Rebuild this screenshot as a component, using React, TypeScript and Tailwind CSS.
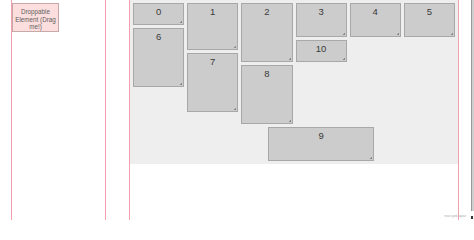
const tiles = [
  { id: 0, cls: "col-start-1 col-span-2 row-start-1 row-span-2" },
  { id: 1, cls: "col-start-3 col-span-2 row-start-1 row-span-4" },
  { id: 2, cls: "col-start-5 col-span-2 row-start-1 row-span-5" },
  { id: 3, cls: "col-start-7 col-span-2 row-start-1 row-span-3" },
  { id: 4, cls: "col-start-9 col-span-2 row-start-1 row-span-3" },
  { id: 5, cls: "col-start-11 col-span-2 row-start-1 row-span-3" },
  { id: 6, cls: "col-start-1 col-span-2 row-start-3 row-span-5" },
  { id: 7, cls: "col-start-3 col-span-2 row-start-5 row-span-5" },
  { id: 8, cls: "col-start-5 col-span-2 row-start-6 row-span-5" },
  { id: 9, cls: "col-start-6 col-span-4 row-start-11 row-span-3" },
  { id: 10, cls: "col-start-7 col-span-2 row-start-4 row-span-2" },
];

const Tile = ({ id, cls }: { id: number; cls: string }) => (
  <div
    className={`relative border border-[#a8a8a8] bg-[#cccccc] text-center ${cls}`}
  >
    <span className="block pt-[2px] text-[9.5px] leading-[11px] text-[#3a3a3a]">
      {id}
    </span>
    {/* resize handle */}
    <span className="absolute bottom-[1px] right-[1px] h-[2px] w-[2px] border-b border-r border-[#888]" />
  </div>
);

export default function App() {
  return (
    <div className="relative flex h-[220px] w-[474px] overflow-hidden bg-white font-['Liberation_Sans',Arial,sans-serif]">
      <div className="w-[11px] shrink-0" />

      {/* Sidebar */}
      <div className="h-full w-[95px] shrink-0 border-x border-[#f2a0ae]">
        <div
          draggable
          className="mt-[3px] h-[29px] w-[47px] border border-[#c9a8a8] bg-[#fddede] pt-[4px] text-center text-[6.3px] leading-[7.5px] text-[#5e5e5e]"
        >
          Droppable
          <br />
          Element (Drag
          <br />
          me!)
        </div>
      </div>

      <div className="w-[23px] shrink-0" />

      {/* Main grid */}
      <div className="h-full w-[330px] shrink-0 border-x border-[#f2a0ae]">
        <div className="grid grid-cols-12 grid-rows-[repeat(13,9.4px)] gap-[3px] bg-[#eeeeee] p-[3px]">
          {tiles.map((t) => (
            <Tile key={t.id} id={t.id} cls={t.cls} />
          ))}
        </div>
      </div>

      <div className="flex-1" />

      {/* Scrollbar */}
      <div className="h-[211px] w-[3px] shrink-0 border-l border-[#999] bg-[#cfcfcf]" />

      <span className="absolute bottom-[2px] right-[8px] text-[3px] leading-[3px] text-[#aaa]">
        react-grid-layout
      </span>
      <span className="absolute bottom-[1px] right-[1px] h-[3px] w-[2px] bg-[#333]" />
    </div>
  );
}
